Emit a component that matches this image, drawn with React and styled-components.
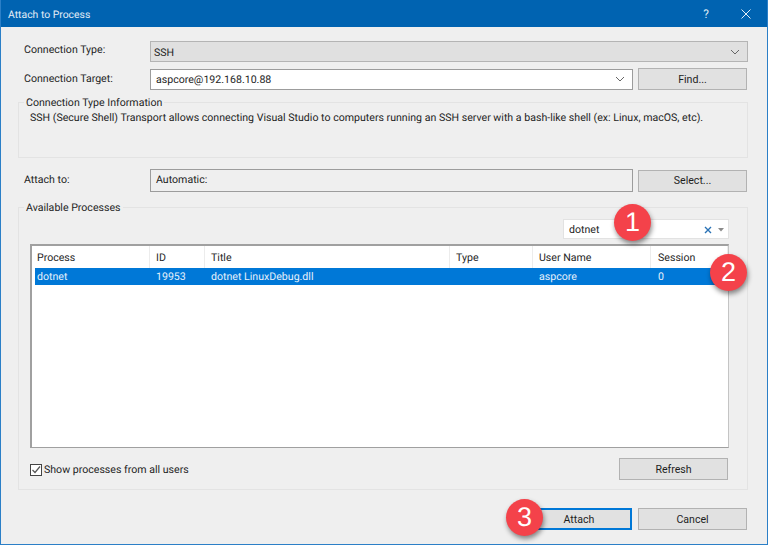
import React from "react";
import styled, { createGlobalStyle } from "styled-components";

const GlobalStyle = createGlobalStyle`
  html, body { margin: 0; padding: 0; }
  body {
    font-family: Roboto, "Open Sans", "Liberation Sans", sans-serif;
    font-size: 10.6px;
    text-rendering: geometricPrecision;
    color: #1e1e1e;
  }
`;

const Dialog = styled.div`
  width: 768px;
  height: 545px;
  box-sizing: border-box;
  border: 1px solid #2b7fc7;
  border-top: 0;
  background: #efefef;
  display: flex;
  flex-direction: column;
  overflow: hidden;
`;

const TitleBar = styled.div`
  height: 27px;
  box-sizing: border-box;
  flex: none;
  background: #0063b1;
  color: #e4eef7;
  display: flex;
  align-items: center;
  padding: 1px 1px 0 7px;
`;

const TitleText = styled.span`
  flex: 1;
  font-size: 10.4px;
`;

const TitleButton = styled.span`
  width: 40px;
  display: flex;
  justify-content: center;
  font-size: 12px;
  color: #dce8f3;
`;

const Content = styled.div`
  flex: 1;
  display: flex;
  flex-direction: column;
  padding: 14px 19px 0 17px;
`;

const FormRow = styled.div`
  display: grid;
  grid-template-columns: 121px 483px 110px;
  column-gap: 5px;
  align-items: center;
  padding-left: 6px;
  margin-top: ${(p) => p.$mt || 0}px;
`;

const Label = styled.label`
  margin-top: ${(p) => p.$shift}px;
`;

const Combo = styled.div`
  box-sizing: border-box;
  height: 21px;
  display: flex;
  align-items: center;
  justify-content: space-between;
  border: 1px solid ${(p) => (p.$disabled ? "#b4b4b4" : "#9c9c9c")};
  background: ${(p) => (p.$disabled ? "#e0e0e0" : "#fff")};
  padding: ${(p) => (p.$disabled ? 1 : 0)}px 7px 0 ${(p) => (p.$disabled ? 3 : 5)}px;
  grid-column: ${(p) => (p.$wide ? "2 / 4" : "auto")};
`;

const ReadOnlyField = styled.div`
  box-sizing: border-box;
  height: 23px;
  border: 1px solid #9c9c9c;
  background: #efefef;
  padding: 3px 5px;
`;

const Button = styled.button`
  box-sizing: border-box;
  width: ${(p) => p.$width || 109}px;
  height: 22px;
  padding: 0;
  border: 1px solid ${(p) => (p.$primary ? "#0078d7" : "#b2b2b2")};
  outline: ${(p) => (p.$primary ? "1px solid #0078d7" : "none")};
  outline-offset: -2px;
  background: #e1e1e1;
  color: #1e1e1e;
  font: inherit;
`;

const Group = styled.fieldset`
  margin: ${(p) => p.$mt}px 0 0;
  padding: 0;
  min-width: 0;
  height: ${(p) => p.$height}px;
  box-sizing: border-box;
  border: 1px solid #e3e3e3;
  display: flex;
  flex-direction: column;
`;

const Legend = styled.legend`
  margin-left: 5px;
  padding: 2px 2px 0;
  line-height: 14px;
`;

const InfoText = styled.div`
  padding: 1px 0 0 11px;
  white-space: nowrap;
`;

const FilterRow = styled.div`
  display: flex;
  justify-content: flex-end;
  padding: 4px 18px 5px 0;
`;

const FilterBox = styled.div`
  position: relative;
  box-sizing: border-box;
  width: 166px;
  height: 20px;
  background: #fff;
  border: 1px solid #e2e2e2;
  display: flex;
  align-items: center;
  padding: 1px 4px 0 5px;
  gap: 6px;
`;

const FilterValue = styled.span`
  flex: 1;
`;

const List = styled.div`
  box-sizing: border-box;
  margin-left: 11px;
  width: 699px;
  height: 204px;
  background: #fff;
  border: 2px solid #a0a0a0;
  border-right-width: 1px;
  border-bottom-width: 1px;
  border-right-color: #c4c4c4;
  padding-left: 3px;
`;

const cols = "115px 55px 245px 83px 118px 1fr";

const HeaderRow = styled.div`
  position: relative;
  display: grid;
  grid-template-columns: ${cols};
  height: 22px;
  align-items: center;
`;

const HeaderCell = styled.div`
  height: 100%;
  display: flex;
  align-items: center;
  padding-left: ${(p) => p.$pad}px;
  border-right: 1px solid #ececec;
  &:last-child { border-right: 0; }
`;

const ProcessRow = styled.div`
  display: grid;
  grid-template-columns: ${cols};
  height: 17px;
  align-items: center;
  background: #0078d7;
  color: #e6f1fb;
`;

const ProcessCell = styled.div`
  padding-left: ${(p) => p.$pad}px;
`;

const ListFooter = styled.div`
  display: flex;
  align-items: center;
  justify-content: space-between;
  padding: 10px 19px 0 11px;
`;

const CheckLabel = styled.label`
  display: flex;
  align-items: center;
  gap: 2px;
  padding-top: 1px;
`;

const CheckBox = styled.span`
  box-sizing: border-box;
  width: 12px;
  height: 12px;
  background: #fff;
  border: 1px solid #444;
  display: flex;
`;

const Actions = styled.div`
  display: flex;
  justify-content: flex-end;
  gap: 6px;
  padding: 18px 1px 0 0;
`;

const AttachWrap = styled.div`
  position: relative;
`;

const Badge = styled.span`
  position: absolute;
  top: ${(p) => p.$top}px;
  left: ${(p) => p.$left}px;
  width: 37px;
  height: 37px;
  border-radius: 50%;
  background: #f4424a;
  color: #fff;
  font-family: "Liberation Sans", Arial, sans-serif;
  font-size: 27px;
  display: flex;
  align-items: center;
  justify-content: center;
  box-shadow: 1px 3px 5px rgba(0, 0, 0, 0.45);
  z-index: 2;
`;

const Chevron = ({ color = "#666" }) => (
  <svg width="10" height="6" viewBox="0 0 10 6">
    <path d="M1 1l4 4 4-4" fill="none" stroke={color} strokeWidth="1" />
  </svg>
);

const headers = [
  ["Process", 2],
  ["ID", 6],
  ["Title", 6],
  ["Type", 6],
  ["User Name", 6],
  ["Session", 7],
];
const cells = [
  ["dotnet", 2],
  ["19953", 6],
  ["dotnet LinuxDebug.dll", 6],
  ["", 6],
  ["aspcore", 6],
  ["0", 7],
];

export default function App() {
  return (
    <>
      <GlobalStyle />
      <Dialog>
        <TitleBar>
          <TitleText>Attach to Process</TitleText>
          <TitleButton>?</TitleButton>
          <TitleButton>
            <svg width="12" height="12" viewBox="0 0 12 12">
              <path d="M1.5 1.5l9 9M10.5 1.5l-9 9" stroke="#e4eef7" strokeWidth="1" />
            </svg>
          </TitleButton>
        </TitleBar>
        <Content>
          <FormRow>
            <Label $shift={-5}>Connection Type:</Label>
            <Combo $disabled $wide>
              SSH
              <Chevron />
            </Combo>
          </FormRow>
          <FormRow $mt={6}>
            <Label $shift={-1}>Connection Target:</Label>
            <Combo>
              aspcore@192.168.10.88
              <Chevron />
            </Combo>
            <Button>Find...</Button>
          </FormRow>
          <Group $mt={4} $height={64}>
            <Legend>Connection Type Information</Legend>
            <InfoText>
              SSH (Secure Shell) Transport allows connecting Visual Studio to computers running an SSH server with a
              bash-like shell (ex: Linux, macOS, etc).
            </InfoText>
          </Group>
          <FormRow $mt={11}>
            <Label $shift={-3}>Attach to:</Label>
            <ReadOnlyField>Automatic:</ReadOnlyField>
            <Button>Select...</Button>
          </FormRow>
          <Group $mt={7} $height={291}>
            <Legend>Available Processes</Legend>
            <FilterRow>
              <FilterBox>
                <FilterValue>dotnet</FilterValue>
                <svg width="8" height="8" viewBox="0 0 8 8">
                  <path d="M1 1l6 6M7 1l-6 6" stroke="#2a72b5" strokeWidth="1.4" />
                </svg>
                <svg width="6" height="4" viewBox="0 0 6 4">
                  <path d="M0 0h6L3 3.5z" fill="#8a8a8a" />
                </svg>
                <Badge $top={-16} $left={50}>1</Badge>
              </FilterBox>
            </FilterRow>
            <List>
              <HeaderRow>
                {headers.map(([text, pad], i) => (
                  <HeaderCell key={i} $pad={pad}>{text}</HeaderCell>
                ))}
                <Badge $top={8} $left={675}>2</Badge>
              </HeaderRow>
              <ProcessRow>
                {cells.map(([text, pad], i) => (
                  <ProcessCell key={i} $pad={pad}>{text}</ProcessCell>
                ))}
              </ProcessRow>
            </List>
            <ListFooter>
              <CheckLabel>
                <CheckBox>
                  <svg width="10" height="10" viewBox="0 0 10 10">
                    <path d="M1.5 5l2.5 2.5L9 1.5" fill="none" stroke="#555" strokeWidth="1.2" />
                  </svg>
                </CheckBox>
                Show processes from all users
              </CheckLabel>
              <Button>Refresh</Button>
            </ListFooter>
          </Group>
          <Actions>
            <AttachWrap>
              <Button $primary $width={106}>Attach</Button>
              <Badge $top={-9} $left={-20}>3</Badge>
            </AttachWrap>
            <Button>Cancel</Button>
          </Actions>
        </Content>
      </Dialog>
    </>
  );
}
